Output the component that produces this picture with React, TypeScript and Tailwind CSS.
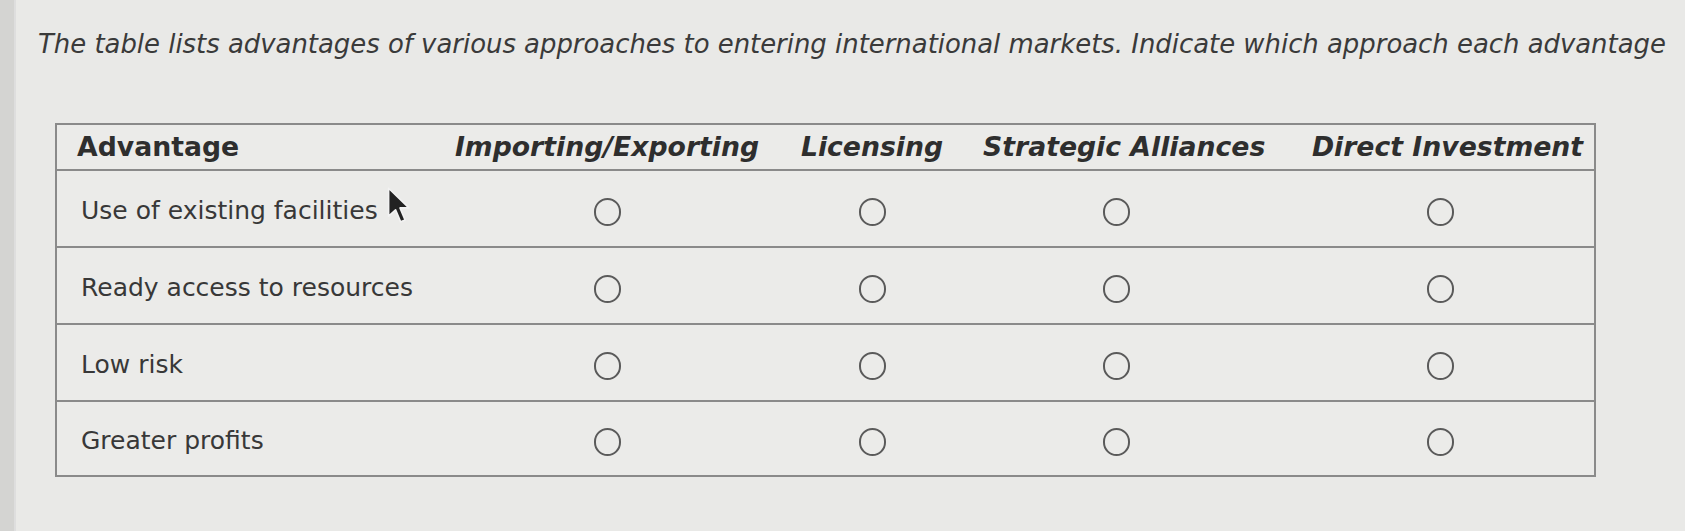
import React from "react";

const rows = [
  "Use of existing facilities",
  "Ready access to resources",
  "Low risk",
  "Greater profits",
];

const approaches = [
  "Importing/Exporting",
  "Licensing",
  "Strategic Alliances",
  "Direct Investment",
];

const cols = "grid grid-cols-[396px_308px_222px_266px_1fr]";

function Radio() {
  return (
    <span className="block w-[27px] h-[28px] rounded-full border-2 border-[#5a5a5a] mt-[8px]" />
  );
}

function Cursor() {
  return (
    <svg
      className="absolute left-[387px] top-[187px]"
      width="26"
      height="38"
      viewBox="0 0 20 30"
    >
      <path
        d="M1 1 L1 23 L6.5 18 L10.5 27.5 L14 26 L10 16.5 L17 16.5 Z"
        fill="#222"
        stroke="#f2f2f2"
        strokeWidth="1.3"
        strokeLinejoin="round"
      />
    </svg>
  );
}

export default function App() {
  return (
    <main className="relative flex w-[1685px] h-[531px] overflow-hidden bg-[#e9e9e7] font-['DejaVu_Sans',Verdana,sans-serif]">
      <div className="w-[16px] shrink-0 bg-[#d4d4d2] border-r-2 border-[#dedede]" />
      <div className="flex flex-col flex-1 min-w-0">
        <p className="pl-[22px] pt-[32px] text-[25.9px] leading-none italic text-[#3a3a3a] whitespace-nowrap">
          The table lists advantages of various approaches to entering international markets. Indicate which approach each advantage
        </p>

        <div className="ml-[39px] mt-[65px] w-[1541px] border-2 border-[#8a8a8a] bg-[#ebebe9]">
          <div className={`${cols} h-[46px] items-center border-b-2 border-[#8a8a8a] text-[26.7px] font-bold text-[#2e2e2e] whitespace-nowrap`}>
            <div className="pl-[20px]">Advantage</div>
            {approaches.map((a, i) => (
              <div
                key={a}
                className={`text-center italic ${i === 3 ? "pl-[52px]" : ""}`}
              >
                {a}
              </div>
            ))}
          </div>

          {rows.map((r, ri) => (
            <div
              key={r}
              className={`${cols} items-center text-[25px] text-[#383838] ${
                ri < rows.length - 1
                  ? "h-[77px] border-b-2 border-[#8a8a8a]"
                  : "h-[73px]"
              }`}
            >
              <div className="pl-[24px] pt-[4px]">{r}</div>
              {approaches.map((a, i) => (
                <div
                  key={a}
                  className={`flex justify-center ${i === 3 ? "pl-[37px]" : ""}`}
                >
                  <Radio />
                </div>
              ))}
            </div>
          ))}
        </div>
      </div>
      <Cursor />
    </main>
  );
}
